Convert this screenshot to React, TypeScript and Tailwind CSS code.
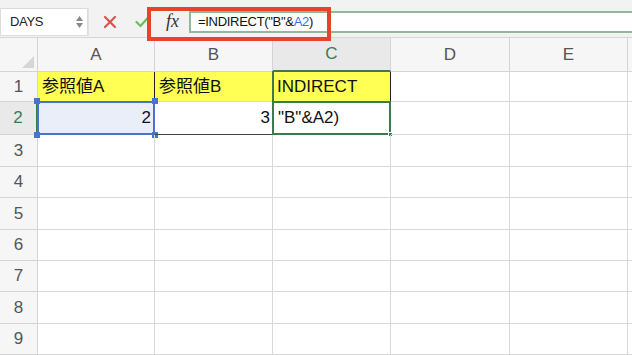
import React from 'react';

const cols = [
  { key: 'A', w: 'w-[117px]' },
  { key: 'B', w: 'w-[118px]' },
  { key: 'C', w: 'w-[118px]' },
  { key: 'D', w: 'w-[119px]' },
  { key: 'E', w: 'w-[118px]' },
];

const rowHeights = ['h-[30px]', 'h-[33px]', 'h-[32px]', 'h-[31px]', 'h-[32px]', 'h-[31px]', 'h-[31px]', 'h-[32px]', 'h-[31px]'];

const FONT = { fontFamily: '"Liberation Sans", "Noto Sans CJK JP", sans-serif' };

function Handle({ pos }: { pos: string }) {
  return <span className={`absolute w-[6px] h-[6px] bg-[#4a74c9] ${pos}`} />;
}

function Cell({ row, col }: { row: number; col: string }) {
  const w = cols.find((c) => c.key === col)!.w;
  const base = `relative shrink-0 ${w} border-r border-b border-[#d9d9d9] flex items-center text-[17px] text-[#111]`;

  if (row === 1 && (col === 'A' || col === 'B' || col === 'C')) {
    const label = col === 'A' ? '参照値A' : col === 'B' ? '参照値B' : 'INDIRECT';
    return (
      <div className={`${base} bg-[#ffff54] !border-r-[#222] pl-[4px]`}>
        {col === 'C' && <span className="absolute left-[-1px] top-[-1px] bottom-0 w-[2px] bg-[#3c7a4e]" />}
        {label}
      </div>
    );
  }
  if (row === 2 && col === 'A') {
    return (
      <div className={`${base} bg-[#e9eef8] justify-end pr-[3px]`}>
        <span className="absolute inset-[-1px] border-2 border-[#4a74c9] pointer-events-none" />
        <Handle pos="left-[-4px] top-[-4px]" />
        <Handle pos="right-[-4px] top-[-4px]" />
        <Handle pos="left-[-4px] bottom-[-4px]" />
        <Handle pos="right-[-4px] bottom-[-4px]" />
        2
      </div>
    );
  }
  if (row === 2 && col === 'B') {
    return <div className={`${base} justify-end pr-[2px] !border-b-[#444]`}>3</div>;
  }
  if (row === 2 && col === 'C') {
    return (
      <div className={`${base} pl-[5px]`}>
        <span className="absolute left-[-1px] top-[-1px] right-[-1px] bottom-[-1px] border-2 border-[#3c7a4e]" />
        <span className="absolute right-[-3px] bottom-[-3px] w-[5px] h-[5px] bg-[#3c7a4e] border border-white" />
        "B"&amp;A2)
      </div>
    );
  }
  return <div className={base} />;
}

export default function App() {
  return (
    <div className="w-[632px] h-[355px] overflow-hidden bg-white relative" style={FONT}>
      {/* toolbar */}
      <div className="h-[38px] bg-[#f2f2f2] border-b border-[#d6d6d6] flex items-center relative">
        <div className="w-[88px] h-[28px] bg-white border border-[#dcdcdc] flex items-center pl-[9px] pr-[4px] mt-[6px] justify-between">
          <span className="text-[13px] tracking-[-0.3px] text-[#222]">DAYS</span>
          <span className="flex flex-col items-center gap-[2px]">
            <svg width="7" height="5" viewBox="0 0 7 5"><path d="M3.5 0 L7 5 L0 5 Z" fill="#8a8a8a" /></svg>
            <svg width="7" height="5" viewBox="0 0 7 5"><path d="M0 0 L7 0 L3.5 5 Z" fill="#8a8a8a" /></svg>
          </span>
        </div>
        <div className="w-px h-[28px] bg-[#e2e2e2] mt-[6px]" />
        <div className="flex items-center gap-[18px] ml-[14px] mt-[6px]">
          <svg width="14" height="14" viewBox="0 0 14 14">
            <path d="M2 2 L12 12 M12 2 L2 12" stroke="#d9534f" strokeWidth="2.2" strokeLinecap="round" />
          </svg>
          <svg width="15" height="13" viewBox="0 0 15 13">
            <path d="M1.5 7 L5.5 11 L13.5 2" stroke="#6cbf5c" strokeWidth="2.2" fill="none" strokeLinecap="round" strokeLinejoin="round" />
          </svg>
        </div>
        <div className="ml-[16px] mt-[6px] flex items-center">
          <span className="text-[18px] italic text-[#333] w-[22px]" style={{ fontFamily: '"Liberation Serif", serif' }}>
            fx
          </span>
        </div>
        <div className="flex-1 ml-[1px] mt-[6px] h-[22px] bg-white border-2 border-[#92b79a] border-r-0 flex items-center pl-[7px] text-[13px] tracking-[-0.3px] text-[#111]">
          =INDIRECT("B"&amp;<span className="text-[#3b6fd6]">A2</span>)
        </div>
        {/* annotation box */}
        <div className="absolute left-[147px] top-[7px] w-[184px] h-[34px] border-[4px] border-[#e8412c] pointer-events-none" />
      </div>

      {/* column headers */}
      <div className="flex h-[34px] bg-[#f6f6f6]">
        <div className="relative shrink-0 w-[38px] border-r border-b border-[#d4d4d4]">
          <svg className="absolute right-[3px] bottom-[3px]" width="12" height="12" viewBox="0 0 12 12">
            <path d="M12 0 L12 12 L0 12 Z" fill="#d6d6d6" />
          </svg>
        </div>
        {cols.map((c) => (
          <div
            key={c.key}
            className={`shrink-0 ${c.w} border-r border-[#d4d4d4] flex items-center justify-center text-[17px] ${
              c.key === 'C' ? 'bg-[#e9e9e9] text-[#3c7a4e] border-b-2 border-b-[#3c7a4e]' : 'text-[#555] border-b'
            }`}
          >
            {c.key}
          </div>
        ))}
        <div className="flex-1 border-b border-[#d4d4d4]" />
      </div>

      {/* rows */}
      {rowHeights.map((h, i) => {
        const r = i + 1;
        return (
          <div key={r} className={`flex ${h}`}>
            <div
              className={`shrink-0 w-[38px] border-b border-[#d4d4d4] flex items-center justify-center text-[17px] ${
                r === 2 ? 'bg-[#e9e9e9] text-[#3c7a4e] border-r-2 border-r-[#3c7a4e]' : 'bg-[#f6f6f6] text-[#555] border-r'
              }`}
            >
              {r}
            </div>
            {cols.map((c) => (
              <Cell key={c.key} row={r} col={c.key} />
            ))}
            <div className="flex-1 border-b border-[#d9d9d9]" />
          </div>
        );
      })}
    </div>
  );
}
